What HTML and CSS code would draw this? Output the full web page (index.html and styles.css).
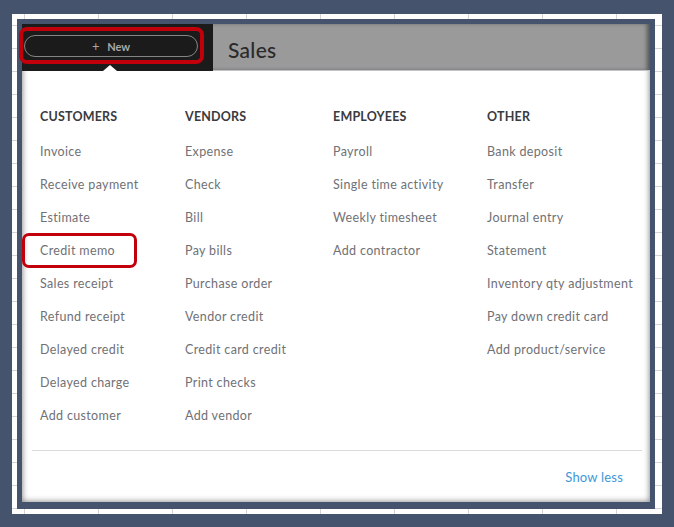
FILE: index.html
```html
<!DOCTYPE html>
<html lang="en">
<head>
    <meta charset="UTF-8">
    <title>New - Sales</title>
    <link rel="stylesheet" href="styles.css">
</head>
<body>
    <div class="sheet">
        <div class="frame">
            <div class="app">
                <div class="topbar">
                    <div class="new-area">
                        <button class="new-btn"><span class="plus">+</span> New</button>
                        <span class="notch"></span>
                    </div>
                    <div class="page-title">Sales</div>
                </div>

                <div class="menu">
                    <div class="columns">
                        <div class="col col-customers">
                            <h3>CUSTOMERS</h3>
                            <a>Invoice</a>
                            <a>Receive payment</a>
                            <a>Estimate</a>
                            <a>Credit memo</a>
                            <a>Sales receipt</a>
                            <a>Refund receipt</a>
                            <a>Delayed credit</a>
                            <a>Delayed charge</a>
                            <a>Add customer</a>
                        </div>
                        <div class="col col-vendors">
                            <h3>VENDORS</h3>
                            <a>Expense</a>
                            <a>Check</a>
                            <a>Bill</a>
                            <a>Pay bills</a>
                            <a>Purchase order</a>
                            <a>Vendor credit</a>
                            <a>Credit card credit</a>
                            <a>Print checks</a>
                            <a>Add vendor</a>
                        </div>
                        <div class="col col-employees">
                            <h3>EMPLOYEES</h3>
                            <a>Payroll</a>
                            <a>Single time activity</a>
                            <a>Weekly timesheet</a>
                            <a>Add contractor</a>
                        </div>
                        <div class="col col-other">
                            <h3>OTHER</h3>
                            <a>Bank deposit</a>
                            <a>Transfer</a>
                            <a>Journal entry</a>
                            <a>Statement</a>
                            <a>Inventory qty adjustment</a>
                            <a>Pay down credit card</a>
                            <a>Add product/service</a>
                        </div>
                    </div>
                    <div class="menu-footer">
                        <a class="show-less">Show less</a>
                    </div>
                </div>

                <!-- red annotation boxes -->
                <div class="mark mark-new"></div>
                <div class="mark mark-memo"></div>
            </div>
        </div>
    </div>
</body>
</html>
```

FILE: styles.css
```css
body {
    margin: 0;
    background: #45546c;
    font-family: 'Lato', 'Noto Sans', sans-serif;
}
.sheet {
    margin: 14px 0 0 12px;
    width: 650px;
    height: 500px;
    overflow: hidden;
    background-color: #fff;
    background-image:
        linear-gradient(to right, #d4d4d4 1px, transparent 1px),
        linear-gradient(to bottom, #d4d4d4 1px, transparent 1px);
    background-size: 74px 23px;
    background-position: 12px 11px;
}
.frame {
    margin: 5px 7px 5px 5px;
    width: 628px;
    height: 478px;
    padding: 5px 5px 7px 5px;
    background: #45546c;
}
.app {
    position: relative;
    height: 478px;
    display: flex;
    flex-direction: column;
    background: #fff;
    box-shadow: inset 0 0 6px rgba(0, 0, 0, 0.55);
}
.topbar {
    display: flex;
    height: 47px;
    flex-shrink: 0;
}
.new-area {
    position: relative;
    width: 191px;
    background: #1b1b1b;
}
.new-btn {
    display: block;
    margin: 11px 0 0 2px;
    width: 174px;
    height: 22px;
    border: 1.5px solid #858585;
    border-radius: 11px;
    background: #1b1b1b;
    color: #a8a8a8;
    font-family: inherit;
    font-size: 11px;
    font-weight: 700;
    padding: 0;
}
.plus {
    font-weight: 400;
    font-size: 13px;
    margin-right: 5px;
}
.notch {
    position: absolute;
    left: 81px;
    bottom: 0;
    border-left: 7px solid transparent;
    border-right: 7px solid transparent;
    border-bottom: 6px solid #fff;
}
.page-title {
    flex: 1;
    background: #9a9a9a;
    border-bottom: 1px solid #c4c4c8;
    box-shadow: inset -4px 0 4px -1px rgba(0, 0, 0, 0.45);
    color: #2a2a2a;
    font-size: 21px;
    font-weight: 500;
    padding: 13px 0 0 15px;
    letter-spacing: 0.3px;
}
.menu {
    flex: 1;
    display: flex;
    flex-direction: column;
    padding: 0 8px 0 10px;
}
.columns {
    display: grid;
    grid-template-columns: 145px 148px 154px auto;
    padding: 38px 0 26px 8px;
}
.col {
    display: flex;
    flex-direction: column;
}
.col h3 {
    margin: 0 0 2px;
    font-size: 12.5px;
    font-weight: 700;
    line-height: 16px;
    color: #3a3b3e;
    letter-spacing: 0.2px;
}
.col a {
    margin-top: 17px;
    font-size: 12.5px;
    line-height: 16px;
    color: #707176;
    letter-spacing: 0.35px;
    white-space: nowrap;
}
.menu-footer {
    border-top: 1px solid #dcdcdf;
    display: flex;
    justify-content: flex-end;
    padding: 18px 19px 0 0;
}
.show-less {
    font-size: 13px;
    line-height: 16px;
    color: #3e98d8;
    letter-spacing: 0.2px;
}
.mark {
    position: absolute;
    border: 3px solid #c2000b;
    border-radius: 7px;
    box-sizing: border-box;
}
.mark-new {
    left: -3px;
    top: 3px;
    width: 185px;
    height: 37px;
    border-width: 4px;
    border-radius: 8px;
}
.mark-memo {
    left: 0;
    top: 209px;
    width: 115px;
    height: 35px;
}
```
